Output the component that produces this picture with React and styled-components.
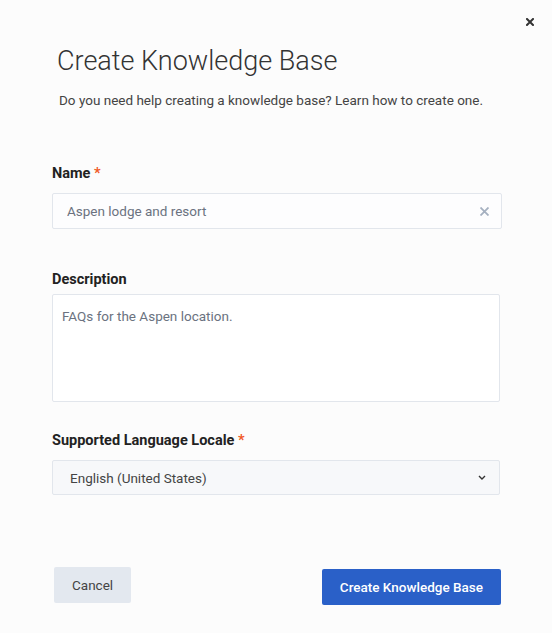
import React, { useState } from 'react';
import styled, { createGlobalStyle } from 'styled-components';

const GlobalStyle = createGlobalStyle`
  html, body {
    margin: 0;
    background: #fcfcfc;
  }
  body {
    font-family: Roboto, "Liberation Sans", Arial, sans-serif;
    color: #222;
  }
  * { box-sizing: border-box; }
`;

function CloseIcon({ size = 8, color = '#333', weight = 2 }) {
  return (
    <svg width={size} height={size} viewBox="0 0 8 8" fill="none">
      <path d="M1 1 L7 7 M7 1 L1 7" stroke={color} strokeWidth={weight} strokeLinecap="square" />
    </svg>
  );
}

function ChevronDown() {
  return (
    <svg width="8" height="5" viewBox="0 0 8 5" fill="none">
      <path d="M1 1 L4 4 L7 1" stroke="#333" strokeWidth="1.4" />
    </svg>
  );
}

export default function App() {
  const [name, setName] = useState('Aspen lodge and resort');
  const [description, setDescription] = useState('FAQs for the Aspen location.');

  return (
    <>
      <GlobalStyle />
      <Dialog>
        <TopBar>
          <IconButton aria-label="Close">
            <CloseIcon />
          </IconButton>
        </TopBar>

        <Header>
          <Title>Create Knowledge Base</Title>
          <Subtitle>Do you need help creating a knowledge base? Learn how to create one.</Subtitle>
        </Header>

        <Form>
          <Field $top={56} $gap={10}>
            <Label>Name <Required>*</Required></Label>
            <InputWrap>
              <TextInput value={name} onChange={(e) => setName(e.target.value)} />
              <ClearButton aria-label="Clear" onClick={() => setName('')}>
                <CloseIcon size={9} color="#a5b0c0" weight={1.6} />
              </ClearButton>
            </InputWrap>
          </Field>

          <Field $top={42} $gap={5}>
            <Label>Description</Label>
            <TextArea value={description} onChange={(e) => setDescription(e.target.value)} />
          </Field>

          <Field $top={30} $gap={10}>
            <Label>Supported Language Locale <Required>*</Required></Label>
            <Select>
              <span>English (United States)</span>
              <ChevronDown />
            </Select>
          </Field>
        </Form>

        <Footer>
          <Button>Cancel</Button>
          <Button $primary>Create Knowledge Base</Button>
        </Footer>
      </Dialog>
    </>
  );
}

const Dialog = styled.div`
  width: 552px;
  height: 633px;
  padding: 14px 0 0 52px;
  display: flex;
  flex-direction: column;
`;

const TopBar = styled.div`
  display: flex;
  justify-content: flex-end;
  padding-right: 14px;
  height: 16px;
`;

const IconButton = styled.button`
  border: 0;
  background: transparent;
  padding: 0;
  width: 16px;
  height: 16px;
  display: flex;
  align-items: center;
  justify-content: center;
  cursor: pointer;
`;

const Header = styled.div`
  margin-top: 15px;
  padding-left: 5px;
`;

const Title = styled.h1`
  margin: 0;
  font-size: 27px;
  line-height: 32px;
  font-weight: 300;
  color: #333;
`;

const Subtitle = styled.p`
  margin: 14px 0 0 2px;
  font-size: 13.5px;
  line-height: 18px;
  color: #444;
`;

const Form = styled.div`
  display: flex;
  flex-direction: column;
  width: 450px;
`;

const Field = styled.div`
  display: flex;
  flex-direction: column;
  margin-top: ${(p) => p.$top}px;
  gap: ${(p) => p.$gap}px;
`;

const Label = styled.label`
  font-size: 14.5px;
  line-height: 18px;
  font-weight: 700;
  color: #222;
`;

const Required = styled.span`
  color: #f05a28;
`;

const InputWrap = styled.div`
  position: relative;
  height: 36px;
`;

const TextInput = styled.input`
  width: 100%;
  height: 36px;
  border: 1px solid #e2e6ec;
  border-radius: 2px;
  background: #fdfdfe;
  padding: 0 32px 0 14px;
  font-family: inherit;
  font-size: 13.5px;
  color: #6b7280;
  outline: none;
`;

const ClearButton = styled.button`
  position: absolute;
  right: 10px;
  top: 10px;
  width: 16px;
  height: 16px;
  border: 0;
  padding: 0;
  background: transparent;
  display: flex;
  align-items: center;
  justify-content: center;
`;

const TextArea = styled.textarea`
  width: 448px;
  height: 108px;
  resize: none;
  border: 1px solid #e2e6ec;
  border-radius: 2px;
  background: #fff;
  padding: 12px 9px;
  font-family: inherit;
  font-size: 13.5px;
  line-height: 18px;
  color: #6b7280;
  outline: none;
`;

const Select = styled.div`
  width: 448px;
  height: 35px;
  border: 1px solid #e2e6ec;
  border-radius: 2px;
  background: #f7f8fa;
  display: flex;
  align-items: center;
  justify-content: space-between;
  padding: 0 13px 0 17px;
  font-size: 13.5px;
  color: #444;
`;

const Footer = styled.div`
  margin-top: auto;
  margin-bottom: 28px;
  width: 449px;
  padding-left: 2px;
  display: flex;
  justify-content: space-between;
  align-items: flex-start;
`;

const Button = styled.button`
  height: 36px;
  padding: 0 18px;
  border: 0;
  border-radius: 2px;
  font-family: inherit;
  font-size: 13.5px;
  font-weight: ${(p) => (p.$primary ? 500 : 400)};
  background: ${(p) => (p.$primary ? '#2a60c8' : '#e3e8ef')};
  color: ${(p) => (p.$primary ? '#fff' : '#444')};
  margin-top: ${(p) => (p.$primary ? '2px' : '0')};
  cursor: pointer;
`;
